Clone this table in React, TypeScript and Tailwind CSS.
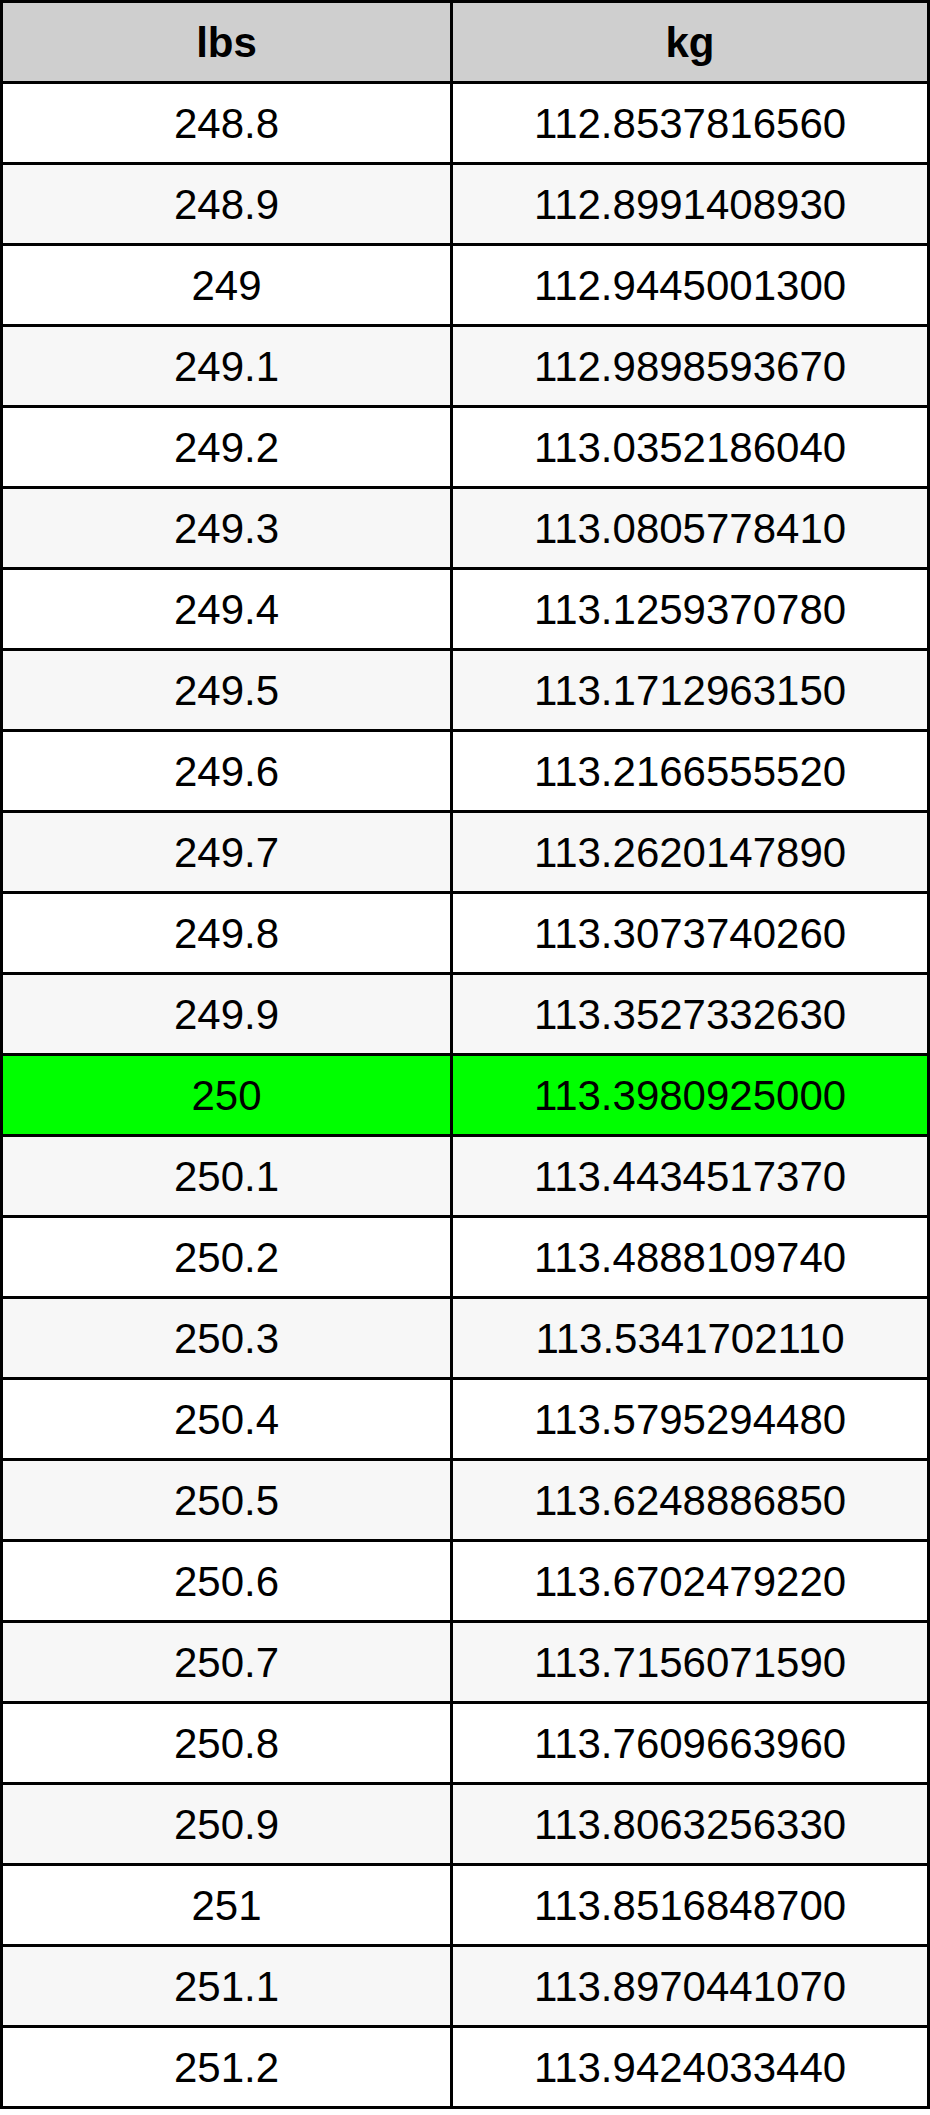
import React from 'react';

const rows: [string, string][] = [
  ['248.8', '112.8537816560'],
  ['248.9', '112.8991408930'],
  ['249', '112.9445001300'],
  ['249.1', '112.9898593670'],
  ['249.2', '113.0352186040'],
  ['249.3', '113.0805778410'],
  ['249.4', '113.1259370780'],
  ['249.5', '113.1712963150'],
  ['249.6', '113.2166555520'],
  ['249.7', '113.2620147890'],
  ['249.8', '113.3073740260'],
  ['249.9', '113.3527332630'],
  ['250', '113.3980925000'],
  ['250.1', '113.4434517370'],
  ['250.2', '113.4888109740'],
  ['250.3', '113.5341702110'],
  ['250.4', '113.5795294480'],
  ['250.5', '113.6248886850'],
  ['250.6', '113.6702479220'],
  ['250.7', '113.7156071590'],
  ['250.8', '113.7609663960'],
  ['250.9', '113.8063256330'],
  ['251', '113.8516848700'],
  ['251.1', '113.8970441070'],
  ['251.2', '113.9424033440'],
];

function rowBg(lbs: string, i: number) {
  if (lbs === '250') return 'bg-[#00ff00]';
  return i % 2 === 0 ? 'bg-white' : 'bg-[#f7f7f7]';
}

export default function App() {
  return (
    <div className="w-[930px] bg-white font-['Liberation_Sans',Arial,sans-serif] text-black">
      <div className="border-[3px] border-black">
        {/* header */}
        <div className="box-content flex h-[78px] border-b-[3px] border-black bg-[#cfcfcf] text-[42px] font-bold">
          <div className="flex w-[450px] items-center justify-center border-r-[3px] border-black">lbs</div>
          <div className="flex flex-1 items-center justify-center">kg</div>
        </div>

        {rows.map(([lbs, kg], i) => (
          <div
            key={lbs}
            className={`box-content flex h-[78px] text-[42px] ${rowBg(lbs, i)} ${i < rows.length - 1 ? 'border-b-[3px] border-black' : ''}`}
          >
            <div className="flex w-[450px] items-center justify-center border-r-[3px] border-black">{lbs}</div>
            <div className="flex flex-1 items-center justify-center">{kg}</div>
          </div>
        ))}
      </div>
    </div>
  );
}
